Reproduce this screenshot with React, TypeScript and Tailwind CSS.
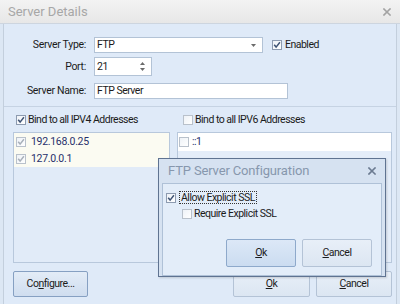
import React from "react";

function Check({ checked, gray, className }: { checked?: boolean; gray?: boolean; className?: string }) {
  return (
    <span
      className={`inline-flex w-[10px] h-[10px] shrink-0 items-center justify-center border bg-linear-to-br from-[#eef2f7] to-[#ffffff] ${
        gray ? "border-[#b9c1cb]" : "border-[#8d9bb0]"
      } ${className ?? ""}`}
    >
      {checked && (
        <svg width="8" height="8" viewBox="0 0 8 8">
          <path
            d="M1.2 3.8 L3.1 6.1 L6.9 1.3"
            fill="none"
            stroke={gray ? "#a8b0ba" : "#3e5374"}
            strokeWidth="1.5"
          />
        </svg>
      )}
    </span>
  );
}

function CloseX({ color, size }: { color: string; size: number }) {
  return (
    <svg width={size} height={size} viewBox="0 0 8 8">
      <path d="M1 1 L7 7 M7 1 L1 7" stroke={color} strokeWidth="1.6" strokeLinecap="square" />
    </svg>
  );
}

export default function App() {
  return (
    <div className="relative w-[400px] h-[304px] overflow-hidden bg-[#dce7f4] flex flex-col font-['Roboto',sans-serif] text-[10.5px] tracking-[-0.5px] text-[#1b1b1b]">
      {/* Title bar */}
      <div className="h-[24px] shrink-0 flex items-center justify-between pl-[8px] pr-[9px] bg-linear-to-b from-[#f3f3f3] to-[#e7e7e7] border-b border-[#cdd5df]">
        <span className="text-[13px] tracking-normal text-[#a7a7a7]">Server Details</span>
        <CloseX color="#a3a3a3" size={8} />
      </div>

      {/* Content */}
      <div className="flex-1 mx-[3px] border-x border-[#c3cfdd] bg-[#dfeaf8] flex flex-col">
        {/* Top section */}
        <div className="h-[83px] shrink-0 border-b border-[#c6d3e3] pt-[13px] flex flex-col">
          <div className="flex items-center h-[16px]">
            <span className="w-[82px] text-right tracking-[-0.3px]">Server Type:</span>
            <div className="ml-[8px] w-[169px] h-[16px] bg-white border border-[#b3c3d6] flex items-center justify-between pl-[2px] pr-[6px]">
              <span>FTP</span>
              <svg width="5" height="3" viewBox="0 0 5 3">
                <path d="M0 0 L5 0 L2.5 3 Z" fill="#6b6b6b" />
              </svg>
            </div>
            <Check checked className="ml-[9px]" />
            <span className="ml-[3px]">Enabled</span>
          </div>
          <div className="flex items-center h-[19px] mt-[4px]">
            <span className="w-[82px] text-right tracking-[-0.3px]">Port:</span>
            <div className="ml-[8px] w-[58px] h-[19px] bg-white border border-[#b3c3d6] flex items-center justify-between pl-[2px] pr-[6px]">
              <span>21</span>
              <div className="flex flex-col gap-[3px]">
                <svg width="5" height="3" viewBox="0 0 5 3">
                  <path d="M0 3 L5 3 L2.5 0 Z" fill="#6b6b6b" />
                </svg>
                <svg width="5" height="3" viewBox="0 0 5 3">
                  <path d="M0 0 L5 0 L2.5 3 Z" fill="#6b6b6b" />
                </svg>
              </div>
            </div>
          </div>
          <div className="flex items-center h-[16px] mt-[7px]">
            <span className="w-[82px] text-right tracking-[-0.3px]">Server Name:</span>
            <div className="ml-[8px] w-[194px] h-[16px] bg-white border border-[#b3c3d6] flex items-center pl-[2px]">
              <span>FTP Server</span>
            </div>
          </div>
        </div>

        {/* Bottom section */}
        <div className="flex-1 flex flex-col pl-[9px] pr-[4px] pt-[5px]">
          <div className="grid grid-cols-[157px_215px] gap-x-[7px]">
            <div className="h-[16px] flex items-center pl-[3px] mb-[4px]">
              <Check checked />
              <span className="ml-[2px]">Bind to all IPV4 Addresses</span>
            </div>
            <div className="h-[16px] flex items-center pl-[6px] mb-[4px]">
              <Check gray />
              <span className="ml-[2px]">Bind to all IPV6 Addresses</span>
            </div>

            <div className="h-[131px] border border-[#b8c8dc] bg-[#e1ebf8] flex flex-col">
              <div className="bg-[#fbfbf2] h-[34px] flex flex-col">
                <div className="h-[18px] flex items-center pl-[2px]">
                  <Check checked gray />
                  <span className="ml-[5px] text-[#27306c] tracking-[-0.3px]">192.168.0.25</span>
                </div>
                <div className="h-[16px] flex items-center pl-[2px]">
                  <Check checked gray />
                  <span className="ml-[5px] text-[#27306c] tracking-[-0.3px]">127.0.0.1</span>
                </div>
              </div>
            </div>
            <div className="h-[131px] border border-[#b8c8dc] bg-[#e4edf9] flex flex-col">
              <div className="bg-white h-[18px] flex items-center pl-[1px]">
                <Check gray />
                <span className="ml-[3px] text-[#27306c]">::1</span>
              </div>
            </div>
          </div>

          <div className="mt-[8px] flex items-center justify-between">
            <div className="w-[75px] h-[26px] rounded-[2px] border border-[#86a0c2] bg-linear-to-b from-[#e3ecf7] to-[#cfddef] flex items-center justify-center">
              <span>
                Co<span className="underline">n</span>figure...
              </span>
            </div>
            <div className="flex gap-[6px]">
              <div className="w-[77px] h-[26px] rounded-[2px] border border-[#b4c3d6] bg-linear-to-b from-[#e8eff8] to-[#dce6f2] flex items-center justify-center">
                <span>
                  <span className="underline">O</span>k
                </span>
              </div>
              <div className="w-[76px] h-[26px] rounded-[2px] border border-[#b4c3d6] bg-linear-to-b from-[#e8eff8] to-[#dce6f2] flex items-center justify-center">
                <span>
                  <span className="underline">C</span>ancel
                </span>
              </div>
            </div>
          </div>
        </div>
      </div>

      {/* Nested dialog */}
      <div className="absolute left-[158px] top-[158px] w-[228px] h-[119px] border border-[#5f7391] bg-[#d6e2f1] flex flex-col shadow-[1px_1px_2px_rgba(0,0,0,0.15)]">
        <div className="h-[24px] shrink-0 flex items-center justify-between pl-[9px] pr-[9px]">
          <span className="text-[13px] tracking-[-0.15px] text-[#8797ad]">FTP Server Configuration</span>
          <CloseX color="#6c7b91" size={8} />
        </div>
        <div className="mx-[3px] h-[93px] border border-[#afc1d7] bg-[#e3edf9] flex flex-col pt-[7px]">
          <div className="h-[13px] flex items-center pl-[3px]">
            <Check checked />
            <span className="ml-[3px] px-[1px] h-[13px] flex items-center border border-dotted border-[#333]">
              Allow Explicit SSL
            </span>
          </div>
          <div className="h-[13px] flex items-center pl-[19px] mt-[3px]">
            <Check gray />
            <span className="ml-[2px]">Require Explicit SSL</span>
          </div>
          <div className="mt-[19px] flex justify-end gap-[6px] pr-[9px]">
            <div className="w-[70px] h-[28px] rounded-[2px] border border-[#8ea9cb] bg-linear-to-b from-[#dce8f7] to-[#cbdcf0] flex items-center justify-center">
              <span>
                <span className="underline">O</span>k
              </span>
            </div>
            <div className="w-[70px] h-[28px] rounded-[2px] border border-[#b4c3d6] bg-linear-to-b from-[#e8eff8] to-[#dce6f2] flex items-center justify-center">
              <span>
                <span className="underline">C</span>ancel
              </span>
            </div>
          </div>
        </div>
      </div>
    </div>
  );
}
